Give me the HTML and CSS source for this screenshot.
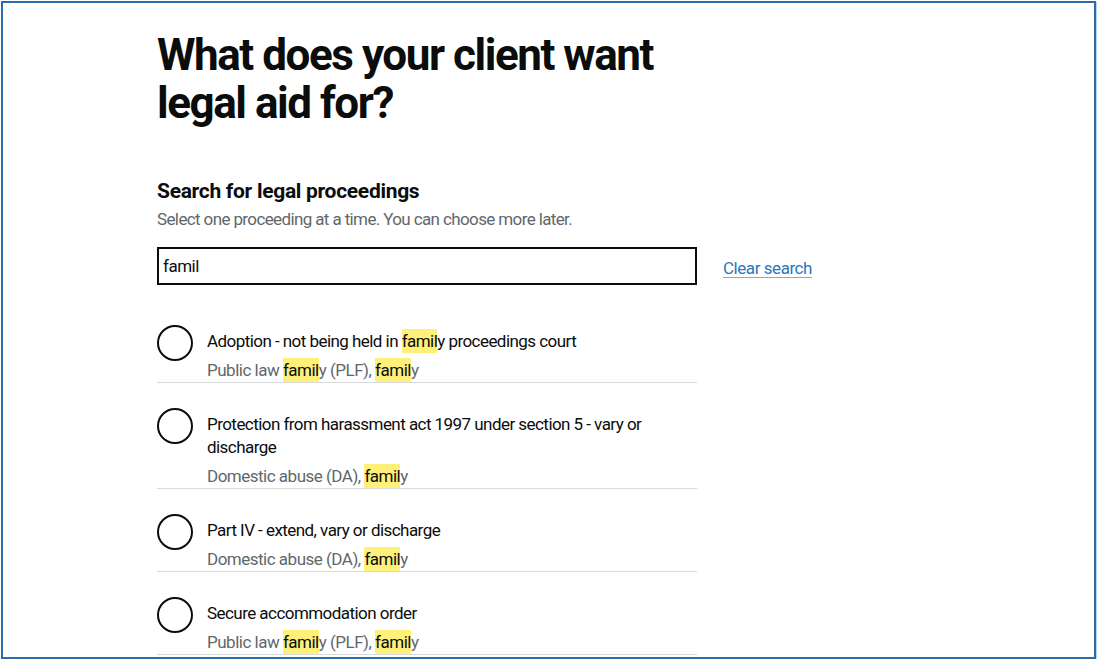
FILE: index.html
```html
<!DOCTYPE html>
<html lang="en">
<head>
<meta charset="utf-8">
<title>What does your client want legal aid for?</title>
<link rel="stylesheet" href="styles.css">
</head>
<body>
<div class="frame">
  <main class="main">
    <h1 class="title">What does your client want legal aid for?</h1>
    <h2 class="search-heading">Search for legal proceedings</h2>
    <p class="hint">Select one proceeding at a time. You can choose more later.</p>
    <div class="search-row">
      <div class="input">famil</div>
      <a class="clear" href="#">Clear search</a>
    </div>
    <ul class="results">
      <li class="item">
        <span class="radio"></span>
        <div class="text">
          <div class="label">Adoption - not being held in <mark>famil</mark>y proceedings court</div>
          <div class="meta">Public law <mark>famil</mark>y (PLF), <mark>famil</mark>y</div>
        </div>
      </li>
      <li class="item">
        <span class="radio"></span>
        <div class="text">
          <div class="label">Protection from harassment act 1997 under section 5 - vary or discharge</div>
          <div class="meta">Domestic abuse (DA), <mark>famil</mark>y</div>
        </div>
      </li>
      <li class="item">
        <span class="radio"></span>
        <div class="text">
          <div class="label">Part IV - extend, vary or discharge</div>
          <div class="meta">Domestic abuse (DA), <mark>famil</mark>y</div>
        </div>
      </li>
      <li class="item">
        <span class="radio"></span>
        <div class="text">
          <div class="label">Secure accommodation order</div>
          <div class="meta">Public law <mark>famil</mark>y (PLF), <mark>famil</mark>y</div>
        </div>
      </li>
    </ul>
  </main>
</div>
</body>
</html>
```
FILE: styles.css
```css
* { box-sizing: border-box; }
html, body { margin: 0; padding: 0; background: #ffffff; }
body {
  font-family: Roboto, "Noto Sans", "Liberation Sans", sans-serif;
  color: #0b0c0c;
  overflow: hidden;
}
.frame {
  margin: 1px 0 0 1px;
  width: 1095px;
  height: 658px;
  border: 2px solid #2e69a8;
  box-shadow: 1px 1px 0 #b9d3ee;
  overflow: hidden;
}
.main {
  padding-left: 154px;
  width: 760px;
}
.title {
  margin: 28px 0 0;
  font-size: 44px;
  line-height: 48px;
  font-weight: 700;
  letter-spacing: -1.45px;
  width: 540px;
}
.search-heading {
  margin: 51px 0 0;
  font-size: 21px;
  line-height: 26px;
  font-weight: 700;
  letter-spacing: -0.3px;
}
.hint {
  margin: 3px 0 0;
  font-size: 17px;
  line-height: 24px;
  color: #5f676b;
  letter-spacing: -0.62px;
}
.search-row {
  margin-top: 16px;
  display: flex;
  align-items: center;
  gap: 26px;
  height: 38px;
}
.input {
  flex: none;
  width: 540px;
  height: 38px;
  border: 2px solid #0b0c0c;
  padding: 0 4px;
  font-size: 17px;
  line-height: 34px;
  letter-spacing: -0.5px;
}
.clear {
  flex: none;
  white-space: nowrap;
  color: #2b76bd;
  font-size: 17px;
  letter-spacing: -0.45px;
  text-decoration: underline;
  text-decoration-color: #7fa9d6;
  text-underline-offset: 3px;
  margin-top: 4px;
}
.results {
  list-style: none;
  margin: 15px 0 0;
  padding: 0;
  width: 540px;
}
.item {
  display: flex;
  align-items: flex-start;
  gap: 14px;
  padding: 30px 0 0;
  border-bottom: 1px solid #d9dadb;
}
.radio {
  flex: none;
  width: 36px;
  height: 36px;
  margin-top: -5px;
  border: 2px solid #0b0c0c;
  border-radius: 50%;
}
.text { flex: 1; }
.label {
  font-size: 17px;
  line-height: 23px;
  letter-spacing: -0.55px;
}
.meta {
  margin-top: 5px;
  font-size: 17px;
  line-height: 24px;
  letter-spacing: -0.5px;
  color: #5f676b;
}
mark {
  background: #fff07a;
  color: #0b0c0c;
  padding: 2px 0;
}
```
